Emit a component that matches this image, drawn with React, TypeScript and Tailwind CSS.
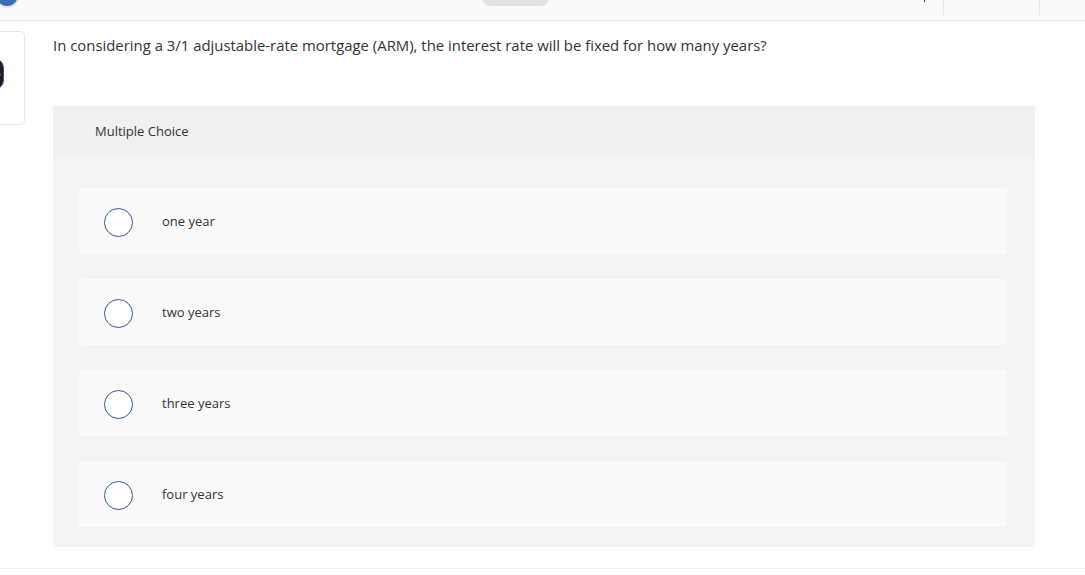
const options = ["one year", "two years", "three years", "four years"];

function Radio() {
  return <span className="block w-[29px] h-[29px] rounded-full border-[1.5px] border-[#2f5b8a] bg-white shrink-0" />;
}

export default function App() {
  return (
    <div className="w-[1085px] h-[575px] overflow-hidden bg-white text-[#333] flex flex-col" style={{ fontFamily: "'Open Sans', Lato, sans-serif" }}>
      {/* top bar */}
      <div className="h-[21px] shrink-0 bg-[#fafafa] border-b border-[#ececec] flex items-start">
        <span className="-ml-[6px] -mt-[18px] w-[26px] h-[26px] rounded-full bg-[#3b6fb0] border-2 border-[#dfe7f2]" />
        <span className="ml-[462px] -mt-[10px] w-[67px] h-[16px] rounded-full bg-[#e3e1e4]" />
        <span className="ml-[375px] w-px h-[2px] bg-[#333]" />
        <span className="ml-[18px] w-px h-[15px] bg-[#e6e6e6]" />
        <span className="ml-[95px] w-px h-[15px] bg-[#e6e6e6]" />
      </div>

      <div className="flex flex-1">
        {/* left card */}
        <div className="mt-[10px] -ml-[10px] w-[35px] h-[94px] rounded-[5px] border border-[#e8e8e8] bg-white overflow-hidden flex items-center pb-[8px]">
          <span className="-ml-[7px] w-[20px] h-[32px] shrink-0 rounded-full bg-[#1c1c22] border border-[#2d5a9a] flex items-center justify-end pr-[2px]">
            <span className="w-[2px] h-[3px] bg-[#8a2a2a]" />
          </span>
        </div>

        <div className="ml-[28px] w-[982px]">
          <p className="mt-[14px] text-[14.9px] leading-[20px] text-[#333]">
            In considering a 3/1 adjustable-rate mortgage (ARM), the interest rate will be fixed for how many years?
          </p>

          <div className="mt-[51px] bg-[#f4f4f4] pb-[20px]">
            <div className="h-[49px] bg-[#f0f0f0] flex items-center pl-[42px] pt-[2px] text-[13px] text-[#333]">Multiple Choice</div>
            <div className="pt-[33px] pl-[26px] pr-[28px] flex flex-col gap-[25px]">
              {options.map((o) => (
                <div key={o} className="h-[66px] bg-[#fafafa] rounded-[3px] flex items-center pl-[25px] pt-[2px]">
                  <Radio />
                  <span className="ml-[29px] text-[13px] text-[#333]">{o}</span>
                </div>
              ))}
            </div>
          </div>
        </div>
      </div>

      <div className="h-[7px] shrink-0 border-t border-[#efefef] bg-white" />
    </div>
  );
}
